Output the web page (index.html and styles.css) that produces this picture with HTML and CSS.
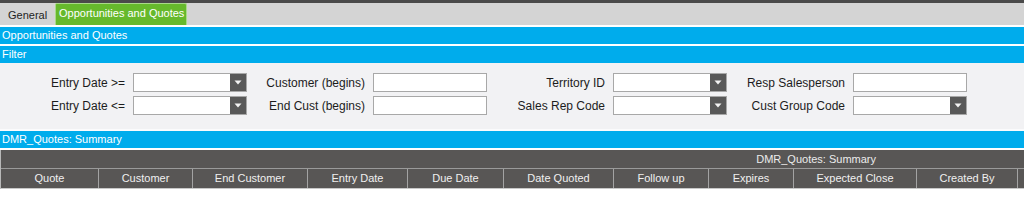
FILE: index.html
```html
<!DOCTYPE html>
<html>
<head>
<meta charset="utf-8">
<link rel="stylesheet" href="styles.css">
</head>
<body>
<div class="topbar"></div>
<div class="tabs">
  <div class="tab">General</div>
  <div class="tab tab-active">Opportunities and Quotes</div>
</div>
<div class="bar bar-main">Opportunities and Quotes</div>
<div class="bar">Filter</div>
<div class="filter">
  <div class="filter-grid">
    <div class="group"><span class="label">Entry Date &gt;=</span><div class="select"><div class="select-btn"><svg width="8" height="5" viewBox="0 0 8 5"><path d="M0.5 0.5H7.5L4 4.5Z" fill="#f4f4f4"/></svg></div></div></div>
    <div class="group"><span class="label">Customer (begins)</span><div class="input"></div></div>
    <div class="group"><span class="label">Territory ID</span><div class="select"><div class="select-btn"><svg width="8" height="5" viewBox="0 0 8 5"><path d="M0.5 0.5H7.5L4 4.5Z" fill="#f4f4f4"/></svg></div></div></div>
    <div class="group"><span class="label">Resp Salesperson</span><div class="input"></div></div>
    <div class="group"><span class="label">Entry Date &lt;=</span><div class="select"><div class="select-btn"><svg width="8" height="5" viewBox="0 0 8 5"><path d="M0.5 0.5H7.5L4 4.5Z" fill="#f4f4f4"/></svg></div></div></div>
    <div class="group"><span class="label">End Cust (begins)</span><div class="input"></div></div>
    <div class="group"><span class="label">Sales Rep Code</span><div class="select"><div class="select-btn"><svg width="8" height="5" viewBox="0 0 8 5"><path d="M0.5 0.5H7.5L4 4.5Z" fill="#f4f4f4"/></svg></div></div></div>
    <div class="group"><span class="label">Cust Group Code</span><div class="select"><div class="select-btn"><svg width="8" height="5" viewBox="0 0 8 5"><path d="M0.5 0.5H7.5L4 4.5Z" fill="#f4f4f4"/></svg></div></div></div>
  </div>
</div>
<div class="bar bar-summary">DMR_Quotes: Summary</div>
<div class="table">
  <div class="caption"><span class="caption-text">DMR_Quotes: Summary</span></div>
  <div class="head">
    <div class="cell c1">Quote</div>
    <div class="cell c2">Customer</div>
    <div class="cell c3">End Customer</div>
    <div class="cell c4">Entry Date</div>
    <div class="cell c5">Due Date</div>
    <div class="cell c6">Date Quoted</div>
    <div class="cell c7">Follow up</div>
    <div class="cell c8">Expires</div>
    <div class="cell c9">Expected Close</div>
    <div class="cell c10">Created By</div>
    <div class="cell c11"></div>
  </div>
</div>
</body>
</html>
```
FILE: styles.css
```css
* { box-sizing: border-box; }
html, body { margin: 0; padding: 0; background: #ffffff; }
body {
  font-family: "Liberation Sans", Arial, sans-serif;
  font-size: 11px;
  width: 1024px;
  height: 202px;
  overflow: hidden;
}
.topbar { height: 3px; background: #4a4a4a; }
.tabs {
  height: 24px;
  background: #d4d4d4;
  border-bottom: 2px solid #ffffff;
  display: flex;
  align-items: flex-end;
}
.tab {
  height: 22px;
  line-height: 25px;
  padding: 0 8px;
  color: #1e1e1e;
  font-size: 11px;
  width: 55px;
  white-space: nowrap;
}
.tab-active {
  width: 132px;
  height: 22px;
  line-height: 19px;
  padding: 0 3px;
  background: #66b92c;
  color: #ffffff;
  border: 1px solid #a9d98a;
  border-bottom: none;
  border-radius: 2px 2px 0 0;
}
.bar {
  height: 17px;
  line-height: 16px;
  background: #00acec;
  color: #ffffff;
  padding-left: 2px;
  font-size: 11px;
  white-space: nowrap;
}
.bar-main { margin-bottom: 2px; }
.bar-summary { margin-bottom: 2px; }
.filter {
  height: 68px;
  background: #f2f2f4;
  border-bottom: 2px solid #fbfbfc;
  padding: 10px 0 0 7px;
}
.filter-grid {
  display: grid;
  grid-template-columns: repeat(4, 240px);
  row-gap: 4px;
}
.group {
  display: flex;
  align-items: center;
  height: 19px;
}
.label {
  width: 118px;
  margin-right: 8px;
  text-align: right;
  font-size: 12px;
  color: #1c1c1c;
  white-space: nowrap;
}
.input, .select {
  width: 114px;
  height: 19px;
  background: #ffffff;
  border: 1px solid #a8a8a8;
}
.select { display: flex; justify-content: flex-end; }
.select-btn {
  width: 16px;
  height: 17px;
  background: #595959;
  display: flex;
  align-items: center;
  justify-content: center;
}
.select-btn svg { display: block; }
.table {
  border-left: 1px solid #b8b8b8;
}
.caption {
  height: 19px;
  background: #585655;
  border-bottom: 1px solid #9a9a9a;
  display: flex;
  justify-content: flex-end;
  align-items: center;
  padding-right: 148px;
  color: #ececec;
  font-size: 11px;
}
.head {
  display: flex;
  height: 20px;
  background: #585655;
  border-bottom: 1px solid #c8c8c8;
}
.cell {
  flex: none;
  height: 19px;
  line-height: 19px;
  text-align: center;
  color: #f0f0f0;
  font-size: 11px;
  border-right: 1px solid #a3a3a3;
  white-space: nowrap;
}
.c1 { width: 98px; }
.c2 { width: 94px; }
.c3 { width: 115px; }
.c4 { width: 100px; }
.c5 { width: 96px; }
.c6 { width: 110px; }
.c7 { width: 95px; }
.c8 { width: 85px; }
.c9 { width: 123px; }
.c10 { width: 101px; }
.c11 { flex: 1; border-right: none; }
```
